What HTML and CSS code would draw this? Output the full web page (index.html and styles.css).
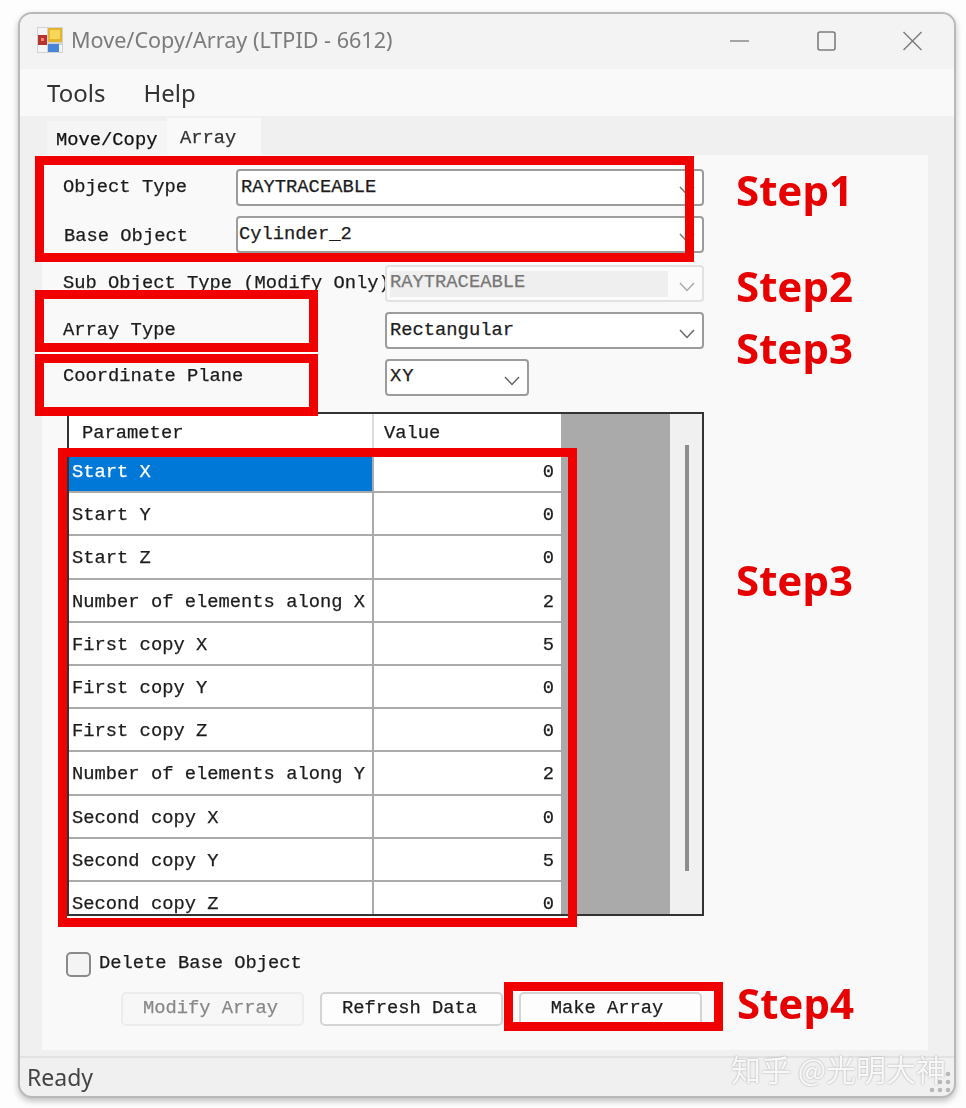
FILE: index.html
```html
<!DOCTYPE html>
<html lang="en">
<head>
    <meta charset="UTF-8">
    <title>Move/Copy/Array (LTPID - 6612)</title>
    <link rel="stylesheet" href="styles.css">
</head>
<body>
    <div class="window">
        <!-- Title bar -->
        <div class="titlebar">
            <svg class="app-icon" width="26" height="26" viewBox="0 0 26 26">
                <rect width="26" height="26" fill="#d2d2d2"/>
                <rect x="1" y="1" width="9" height="7" fill="#f4f4f4"/>
                <rect x="1" y="18" width="9" height="7" fill="#f4f4f4"/>
                <rect x="11" y="18" width="14" height="7" fill="#f4f4f4"/>
                <rect x="11" y="1" width="14" height="14" fill="#e3b52c"/>
                <rect x="13" y="3" width="10" height="9" fill="#f7d65a"/>
                <rect x="1" y="8" width="9" height="10" fill="#b9332e"/>
                <rect x="4" y="11" width="3" height="3" fill="#f08080"/>
                <rect x="11" y="17" width="11" height="8" fill="#4a86d8"/>
            </svg>
            <span class="title">Move/Copy/Array (LTPID - 6612)</span>
            <div class="win-buttons">
                <svg width="19" height="20" viewBox="0 0 19 20"><path d="M0 10H19" stroke="#8a8a8a" stroke-width="1.5" fill="none"/></svg>
                <svg width="19" height="20" viewBox="0 0 19 20"><rect x="1" y="1" width="17" height="18" rx="2" stroke="#7d7d7d" stroke-width="1.6" fill="none"/></svg>
                <svg width="19" height="20" viewBox="0 0 19 20"><path d="M0.5 1L18.5 19M18.5 1L0.5 19" stroke="#7d7d7d" stroke-width="1.5" fill="none"/></svg>
            </div>
        </div>

        <!-- Menu -->
        <div class="menubar">
            <span>Tools</span>
            <span>Help</span>
        </div>

        <!-- Tabs -->
        <div class="tabs">
            <div class="tab">Move/Copy</div>
            <div class="tab active">Array</div>
        </div>

        <div class="panel">
            <div class="row row-wide">
                <label>Object Type</label>
                <div class="combo"><span>RAYTRACEABLE</span><svg class="chevron" viewBox="0 0 16 10"><path d="M1 1L8 8.5L15 1" fill="none" stroke="#777" stroke-width="1.5"/></svg></div>
            </div>
            <div class="row row-wide">
                <label class="label-down">Base Object</label>
                <div class="combo combo-tight"><span>Cylinder_2</span><svg class="chevron" viewBox="0 0 16 10"><path d="M1 1L8 8.5L15 1" fill="none" stroke="#777" stroke-width="1.5"/></svg></div>
            </div>
            <div class="row row-sub">
                <label class="label-long">Sub Object Type (Modify Only)</label>
                <div class="combo disabled"><span class="disabled-value">RAYTRACEABLE</span><svg class="chevron" viewBox="0 0 16 10"><path d="M1 1L8 8.5L15 1" fill="none" stroke="#aaa" stroke-width="1.5"/></svg></div>
            </div>
            <div class="row">
                <label>Array Type</label>
                <div class="combo"><span>Rectangular</span><svg class="chevron" viewBox="0 0 16 10"><path d="M1 1L8 8.5L15 1" fill="none" stroke="#666" stroke-width="1.5"/></svg></div>
            </div>
            <div class="row row-short">
                <label class="label-up">Coordinate Plane</label>
                <div class="combo"><span class="xy">XY</span><svg class="chevron" viewBox="0 0 16 10"><path d="M1 1L8 8.5L15 1" fill="none" stroke="#666" stroke-width="1.5"/></svg></div>
            </div>

            <!-- Parameter grid -->
            <div class="grid">
                <div class="grid-cells">
                    <div class="grid-head"><div class="head-param">Parameter</div><div class="head-value">Value</div></div>
                    <div class="grid-row selected"><div class="name">Start X</div><div class="value">0</div></div>
                    <div class="grid-row"><div class="name">Start Y</div><div class="value">0</div></div>
                    <div class="grid-row"><div class="name">Start Z</div><div class="value">0</div></div>
                    <div class="grid-row"><div class="name">Number of elements along X</div><div class="value">2</div></div>
                    <div class="grid-row"><div class="name">First copy X</div><div class="value">5</div></div>
                    <div class="grid-row"><div class="name">First copy Y</div><div class="value">0</div></div>
                    <div class="grid-row"><div class="name">First copy Z</div><div class="value">0</div></div>
                    <div class="grid-row"><div class="name">Number of elements along Y</div><div class="value">2</div></div>
                    <div class="grid-row"><div class="name">Second copy X</div><div class="value">0</div></div>
                    <div class="grid-row"><div class="name">Second copy Y</div><div class="value">5</div></div>
                    <div class="grid-row"><div class="name">Second copy Z</div><div class="value">0</div></div>
                </div>
                <div class="grid-empty"></div>
                <div class="scrollbar"><div class="thumb"></div></div>
            </div>

            <div class="check-row">
                <span class="checkbox"></span>
                <label>Delete Base Object</label>
            </div>

            <div class="buttons">
                <button class="btn" disabled>Modify Array</button>
                <button class="btn">Refresh Data</button>
                <button class="btn btn-make">Make Array</button>
            </div>
        </div>

        <!-- Status bar -->
        <div class="statusbar">
            <span>Ready</span>
            <svg class="grip" width="30" height="30" viewBox="0 0 30 30" fill="#b8b8b8">
                <circle cx="24" cy="8" r="2.3"/>
                <circle cx="16" cy="16" r="2.3"/><circle cx="24" cy="16" r="2.3"/>
                <circle cx="8" cy="24" r="2.3"/><circle cx="16" cy="24" r="2.3"/><circle cx="24" cy="24" r="2.3"/>
            </svg>
        </div>
    </div>

    <!-- Red annotations drawn over the screenshot -->
    <div class="mark mark-base"></div>
    <div class="mark mark-array"></div>
    <div class="mark mark-plane"></div>
    <div class="mark mark-grid"></div>
    <div class="mark mark-make"></div>

    <div class="step step1">Step1</div>
    <div class="step step2">Step2</div>
    <div class="step step3a">Step3</div>
    <div class="step step3b">Step3</div>
    <div class="step step4">Step4</div>

    <div class="watermark">知乎 @光明大神</div>
</body>
</html>
```

FILE: styles.css
```css
/* Global styles */
html, body {
    margin: 0;
    padding: 0;
}

body {
    position: relative;
    width: 966px;
    height: 1108px;
    overflow: hidden;
    background: #fdfdfd;
    font-family: 'Liberation Mono', monospace;
    font-size: 18.8px;
    color: #1c1c1c;
    -webkit-text-stroke: 0.25px currentColor;
}

.window {
    box-sizing: border-box;
    width: 938px;
    height: 1086px;
    margin: 12px 0 0 18px;
    display: flex;
    flex-direction: column;
    background: #f0f0f0;
    border: 2px solid #b9b9b9;
    border-radius: 14px;
    box-shadow: 0 3px 6px rgba(0, 0, 0, 0.25);
    overflow: hidden;
    filter: blur(0.35px);
}

/* Title bar */
.titlebar {
    box-sizing: border-box;
    height: 55px;
    flex: none;
    display: flex;
    align-items: center;
    padding: 0 0 4px 17px;
    background: #f3f3f3;
}

.app-icon {
    margin-right: 8px;
}

.title {
    font-family: 'Noto Sans', sans-serif;
    font-size: 21.6px;
    color: #7b7b7b;
    -webkit-text-stroke: 0;
}

.win-buttons {
    margin: 3px 32px 0 auto;
    display: flex;
    gap: 67.5px;
}

/* Menu */
.menubar {
    height: 47px;
    flex: none;
    display: flex;
    align-items: center;
    gap: 38px;
    padding-left: 27px;
    background: #f9f9f9;
    font-family: 'Noto Sans', sans-serif;
    font-size: 24px;
    color: #333;
    -webkit-text-stroke: 0;
}

/* Tabs */
.tabs {
    height: 39px;
    flex: none;
    display: flex;
    align-items: flex-end;
    padding-left: 27px;
}

.tab {
    box-sizing: border-box;
    width: 120px;
    height: 34px;
    padding-left: 9px;
    line-height: 38px;
    background: #f5f5f5;
    color: #111;
}

.tab.active {
    width: 94px;
    height: 37px;
    padding-left: 13px;
    line-height: 40px;
    background: #f9f9f9;
    color: #333;
}

/* Main panel */
.panel {
    box-sizing: border-box;
    height: 895px;
    flex: none;
    margin: 0 26px 0 22px;
    padding: 14px 0 0 21px;
    background: #f9f9f9;
}

.row {
    display: grid;
    grid-template-columns: 322px 319px;
    align-items: center;
    height: 37px;
    margin-bottom: 10px;
}

.row label {
    margin-top: -2px;
}

.row-wide {
    grid-template-columns: 173px 468px;
}

.row-sub {
    margin-top: 12px;
}

.row-short {
    grid-template-columns: 322px 144px;
    margin-bottom: 16px;
}

.row .label-up {
    margin-top: -4px;
}

.row .label-down {
    margin-top: 2px;
    padding-left: 1px;
}

.label-long {
    white-space: nowrap;
}

.combo {
    box-sizing: border-box;
    position: relative;
    height: 37px;
    display: flex;
    align-items: center;
    padding: 0 0 2px 3px;
    background: #fff;
    border: 2px solid #9c9c9c;
    border-radius: 4px;
}

.combo-tight {
    padding-left: 1px;
}

.combo.disabled {
    padding: 3px;
    background: #fbfbfb;
    border-color: #e2e2e2;
}

.disabled-value {
    width: 278px;
    height: 26px;
    line-height: 22px;
    background: #efefef;
    color: #777;
}

.xy {
    letter-spacing: 1px;
    margin-top: -2px;
}

.chevron {
    position: absolute;
    right: 7px;
    top: 15px;
    width: 16px;
    height: 10px;
}

/* Parameter grid */
.grid {
    box-sizing: border-box;
    display: flex;
    width: 637px;
    height: 504px;
    margin-left: 4px;
    background: #aaa;
    border: 2px solid #333;
    overflow: hidden;
}

.grid-cells {
    width: 492px;
    flex: none;
    overflow: hidden;
    background: #fff;
}

.grid-head, .grid-row {
    display: grid;
    grid-template-columns: 305px 187px;
}

.grid-head {
    height: 36px;
    line-height: 38px;
}

.head-param {
    padding-left: 13px;
    border-right: 2px solid #ddd;
}

.head-value {
    padding-left: 10px;
}

.grid-row {
    box-sizing: border-box;
    height: 43.2px;
    border-bottom: 2px solid #aaa;
}

.name, .value {
    padding-top: 4px;
    line-height: 37.2px;
}

.name {
    padding-left: 3px;
    border-right: 2px solid #aaa;
}

.value {
    padding-right: 7px;
    text-align: right;
}

.selected .name {
    background: #0078d7;
    color: #fff;
}

.grid-empty {
    width: 109px;
    flex: none;
}

.scrollbar {
    flex: 1;
    position: relative;
    background: #f0f0f0;
}

.thumb {
    position: absolute;
    left: 15px;
    top: 31px;
    width: 4px;
    height: 426px;
    background: #8d8d8d;
}

/* Checkbox and buttons */
.check-row {
    display: flex;
    align-items: center;
    gap: 8px;
    height: 24px;
    margin: 36px 0 0 3px;
}

.check-row label {
    margin-top: -2px;
}

.checkbox {
    box-sizing: border-box;
    width: 25px;
    height: 25px;
    background: #f4f4f4;
    border: 2px solid #8a8a8a;
    border-radius: 5px;
}

.buttons {
    display: flex;
    gap: 16px;
    margin: 16px 0 0 58px;
}

.btn {
    box-sizing: border-box;
    width: 183px;
    height: 34px;
    padding: 0 4px 2px 0;
    background: #fdfdfd;
    border: 2px solid #d4d4d4;
    border-radius: 5px;
    font-family: inherit;
    font-size: inherit;
    color: #1c1c1c;
}

.btn:disabled {
    background: #f7f7f7;
    border-color: #ececec;
    color: #888;
}

.btn-make {
    padding-right: 7px;
}

/* Status bar */
.statusbar {
    flex: 1;
    position: relative;
    display: flex;
    align-items: center;
    margin-top: 6px;
    padding-left: 7px;
    border-top: 2px solid #e2e2e2;
    font-family: 'Noto Sans', sans-serif;
    font-size: 23px;
    color: #444;
    -webkit-text-stroke: 0;
}

.grip {
    position: absolute;
    right: 0;
    bottom: 0;
}

/* Annotations */
.mark {
    position: absolute;
    box-sizing: border-box;
    border: 9px solid #f00000;
}

.mark-base {
    left: 35px;
    top: 156px;
    width: 659px;
    height: 106px;
}

.mark-array {
    left: 35px;
    top: 290px;
    width: 283px;
    height: 62px;
}

.mark-plane {
    left: 35px;
    top: 354px;
    width: 283px;
    height: 62px;
    box-shadow: 0 -2px 0 #fff;
}

.mark-grid {
    left: 58px;
    top: 448px;
    width: 519px;
    height: 479px;
}

.mark-make {
    left: 504px;
    top: 982px;
    width: 219px;
    height: 49px;
}

.step {
    position: absolute;
    font-family: 'Noto Sans', sans-serif;
    font-size: 42px;
    font-weight: 700;
    line-height: 48px;
    color: #e60000;
    -webkit-text-stroke: 0;
}

.step1 { left: 736px; top: 166px; }
.step2 { left: 736px; top: 262px; }
.step3a { left: 736px; top: 324px; }
.step3b { left: 736px; top: 556px; }
.step4 { left: 737px; top: 979px; }

.watermark {
    position: absolute;
    left: 731px;
    top: 1049px;
    font-family: 'Noto Sans CJK SC', sans-serif;
    font-size: 30px;
    line-height: 38px;
    color: rgba(255, 255, 255, 0.9);
    text-shadow: 0 0 2px rgba(0, 0, 0, 0.35);
    white-space: nowrap;
    -webkit-text-stroke: 0;
}
```
